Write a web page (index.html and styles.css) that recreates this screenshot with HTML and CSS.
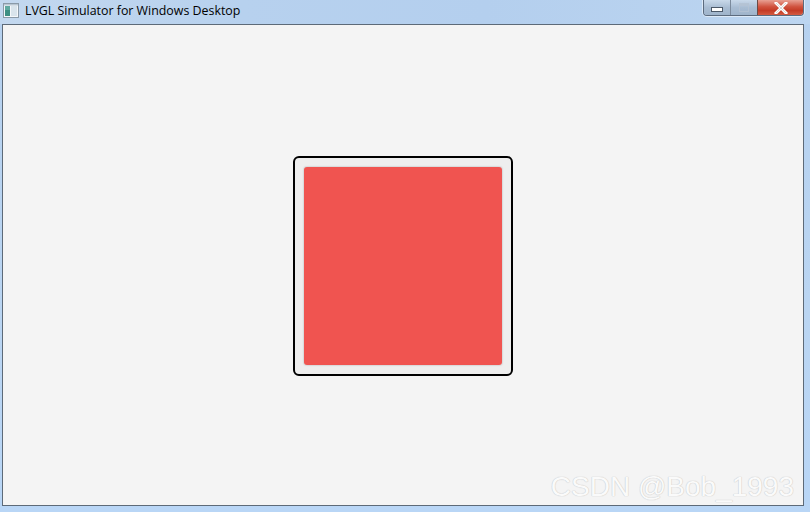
FILE: index.html
```html
<!DOCTYPE html>
<html>
<head>
<meta charset="utf-8">
<link rel="stylesheet" href="styles.css">
</head>
<body>
<div class="window">
  <div class="titlebar">
    <div class="title">
      <svg class="appicon" width="16" height="15" viewBox="0 0 16 15">
        <rect x="0.5" y="0.5" width="15" height="14" fill="#f4f7fa" stroke="#8a9aa8"/>
        <rect x="2" y="3" width="5" height="10" fill="#3d8f83"/>
        <rect x="2" y="3" width="5" height="4" fill="#5fa9a0"/>
        <rect x="8" y="3" width="6" height="10" fill="#d9e4ec"/>
        <rect x="1" y="1" width="14" height="1.5" fill="#b8c6d2"/>
      </svg>
      <span class="title-text">LVGL Simulator for Windows Desktop</span>
    </div>
    <div class="caption-buttons">
      <div class="cbtn cmin"><span class="min-glyph"></span></div>
      <div class="cbtn cmax"><span class="max-glyph"></span></div>
      <div class="cbtn cclose">
        <svg width="14" height="12" viewBox="0 0 14 12"><path d="M2 1 L12 11 M12 1 L2 11" stroke="#fff" stroke-width="3" stroke-linecap="square"/><path d="M2 1 L12 11 M12 1 L2 11" stroke="#4a4a4a" stroke-width="0.6" opacity="0.35"/></svg>
      </div>
    </div>
  </div>
  <div class="client">
    <div class="lv-obj">
      <div class="lv-inner"></div>
    </div>
    <div class="watermark">CSDN @Bob_1993</div>
  </div>
</div>
</body>
</html>
```
FILE: styles.css
```css
html, body {
  margin: 0;
  padding: 0;
}
body {
  width: 810px;
  height: 512px;
  overflow: hidden;
  background: linear-gradient(180deg, #b6d1ef 0%, #bad5f2 60%, #b9d6f6 100%);
  font-family: "Segoe UI", "Open Sans", "Noto Sans", sans-serif;
}
.window {
  display: flex;
  flex-direction: column;
  height: 512px;
}
.titlebar {
  height: 24px;
  display: flex;
  justify-content: space-between;
  align-items: flex-start;
  padding: 0 6px 0 3px;
  background: linear-gradient(90deg, #c3d8ef 0%, #b7d1ee 30%, #b4cfee 60%, #bcd5f0 100%);
}
.title {
  display: flex;
  align-items: center;
  gap: 6px;
  height: 19px;
  padding-top: 1px;
}
.appicon {
  display: block;
}
.title-text {
  font-size: 12.4px;
  color: #000;
  line-height: 16px;
}
.caption-buttons {
  display: flex;
  height: 15px;
  border: 1px solid #5c6b7e;
  border-top: none;
  border-radius: 0 0 4px 4px;
  overflow: hidden;
  box-shadow: 0 0 0 1px rgba(255,255,255,0.5);
}
.cbtn {
  display: flex;
  align-items: center;
  justify-content: center;
  height: 15px;
}
.cmin, .cmax {
  width: 26px;
  background: linear-gradient(180deg, #c9d9ea 0%, #a9bdd3 50%, #9fb4cb 100%);
}
.cmin {
  border-right: 1px solid #7b8a9c;
}
.cmax {
  border-right: 1px solid #6b4a45;
}
.min-glyph {
  width: 10px;
  height: 3px;
  background: #fff;
  border: 1px solid #4b5868;
  margin-top: 4px;
}
.max-glyph {
  width: 8px;
  height: 7px;
  border: 1px solid #b4c2d2;
  box-shadow: inset 0 2px 0 #b4c2d2;
  opacity: 0.8;
}
.cclose {
  width: 45px;
  background: linear-gradient(180deg, #e8a093 0%, #d0523e 45%, #c43b26 70%, #d35a41 100%);
}
.client {
  position: relative;
  margin: 0 6px 0 2px;
  height: 480px;
  border: 1px solid #5d6a78;
  background: #f4f4f4;
  display: grid;
  place-items: center;
}
.lv-obj {
  box-sizing: border-box;
  width: 220px;
  height: 220px;
  border: 2px solid #000;
  border-radius: 6px;
  padding: 9px;
  background: #eeeeee;
  margin-top: 2px;
}
.lv-inner {
  width: 198px;
  height: 198px;
  border-radius: 3px;
  background: #f05450;
  box-shadow: 0 0 1px 1px rgba(180,180,180,0.35);
}
.watermark {
  position: absolute;
  right: 9px;
  bottom: 2px;
  font-family: "Liberation Sans", Arial, sans-serif;
  font-size: 28px;
  color: #fafafa;
  text-shadow: 0 0 1px #c8c8c8, 0 0 1px #c8c8c8;
}
```
